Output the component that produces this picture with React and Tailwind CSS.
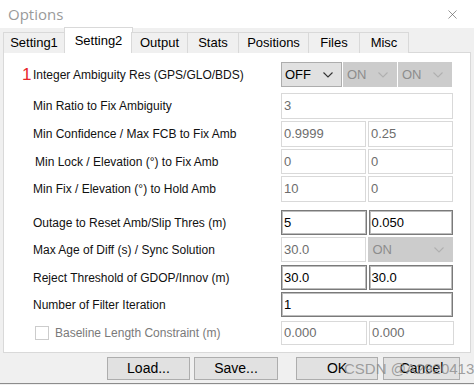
import { X } from 'lucide-react'

const font = { fontFamily: '"Liberation Sans", Arial, sans-serif' }

function Chevron({ color }) {
  return (
    <svg width="10" height="6" viewBox="0 0 10 6" className="shrink-0">
      <path d="M0.5 0.5 L5 5 L9.5 0.5" fill="none" stroke={color} strokeWidth="1.1" />
    </svg>
  )
}

function Select({ value, width, disabled }) {
  return (
    <div
      className={`flex h-full items-center justify-between pl-[3px] pr-[8px] ${width} ${
        disabled
          ? 'bg-[#cccccc] border border-[#cccccc] text-[#8d8d8d]'
          : 'bg-[#e1e1e1] border border-[#adadad] text-black'
      }`}
    >
      <span>{value}</span>
      <Chevron color={disabled ? '#b0b0b0' : '#333'} />
    </div>
  )
}

function Field({ value, active, className = '' }) {
  return (
    <div
      className={`flex h-full items-center px-[2px] bg-white ${
        active
          ? 'border border-[#7a7a7a] shadow-[inset_0_0_0_1px_#bdbdbd] text-black'
          : 'border border-[#d9d9d9] text-[#6d6d6d]'
      } ${className}`}
    >
      {value}
    </div>
  )
}

function Row({ label, children, mt, h = 'h-[25px]', indent = 'pl-[29px]' }) {
  return (
    <div className={`flex items-center ${h} ${mt}`}>
      <div className={`w-[277px] ${indent} text-[12px] text-[#111] whitespace-nowrap`}>{label}</div>
      <div className="flex h-full w-[172px] gap-[2px]">{children}</div>
    </div>
  )
}

const tabs = ['Setting1', 'Setting2', 'Output', 'Stats', 'Positions', 'Files', 'Misc']
const tabW = ['w-[62px]', 'w-[69px]', 'w-[57px]', 'w-[52px]', 'w-[71px]', 'w-[52px]', 'w-[50px]']

export default function App() {
  return (
    <div className="w-[474px] h-[385px] bg-[#f0f0f0] flex flex-col text-[13px] overflow-hidden" style={font}>
      {/* title bar */}
      <div className="h-[28px] bg-white flex items-center justify-between pl-[8px] pr-[14px]">
        <span className="text-[15px] text-[#9a9a9a]" style={{ fontFamily: '"Open Sans", "Liberation Sans", sans-serif' }}>Options</span>
        <X size={15} strokeWidth={1} color="#555" />
      </div>

      {/* tabs */}
      <div className="flex items-end h-[25px] pl-[3px] relative z-10">
        {tabs.map((t, i) =>
          i === 1 ? (
            <div
              key={t}
              className={`${tabW[i]} h-[26px] -mx-[1px] bg-white border border-b-0 border-[#d9d9d9] flex items-start pt-[3px] justify-center text-black`}
            >
              {t}
            </div>
          ) : (
            <div
              key={t}
              className={`${tabW[i]} h-[21px] bg-[#f0f0f0] border border-b-0 border-[#d9d9d9] -ml-[1px] first:ml-0 flex items-center justify-center text-black`}
            >
              {t}
            </div>
          )
        )}
      </div>

      {/* panel */}
      <div className="ml-[3px] w-[468px] h-[301px] -mt-[1px] bg-white border border-[#d9d9d9] flex flex-col">
        <div className="flex items-center h-[25px] mt-[9px]">
          <div className="w-[277px] flex items-center whitespace-nowrap">
            <span className="w-[29px] pl-[18px] text-[17px] leading-none text-[#e8262a]">1</span>
            <span className="text-[12px] text-[#111]">Integer Ambiguity Res (GPS/GLO/BDS)</span>
          </div>
          <div className="flex h-full gap-[1px]">
            <Select value="OFF" width="w-[61px]" />
            <Select value="ON" width="w-[54px]" disabled />
            <Select value="ON" width="w-[54px]" disabled />
          </div>
        </div>

        <Row label="Min Ratio to Fix Ambiguity" mt="mt-[6px]" h="h-[26px]">
          <Field value="3" className="w-full" />
        </Row>
        <Row label="Min Confidence / Max FCB to Fix Amb" mt="mt-[2px]" h="h-[26px]">
          <Field value="0.9999" className="w-[85px]" />
          <Field value="0.25" className="w-[85px]" />
        </Row>
        <Row label="Min Lock / Elevation (°) to Fix Amb" mt="mt-[2px]" indent="pl-[31px]">
          <Field value="0" className="w-[85px]" />
          <Field value="0" className="w-[85px]" />
        </Row>
        <Row label="Min Fix / Elevation (°) to Hold Amb" mt="mt-[2px]" h="h-[26px]">
          <Field value="10" className="w-[85px]" />
          <Field value="0" className="w-[85px]" />
        </Row>

        <Row label="Outage to Reset Amb/Slip Thres (m)" mt="mt-[8px]">
          <Field value="5" active className="w-[86px]" />
          <Field value="0.050" active className="w-[85px]" />
        </Row>
        <Row label="Max Age of Diff (s) / Sync Solution" mt="mt-[2px]">
          <Field value="30.0" className="w-[86px]" />
          <Select value="ON" width="w-[85px]" disabled />
        </Row>
        <Row label="Reject Threshold of GDOP/Innov (m)" mt="mt-[3px]">
          <Field value="30.0" active className="w-[86px]" />
          <Field value="30.0" active className="w-[85px]" />
        </Row>
        <Row label="Number of Filter Iteration" mt="mt-[2px]">
          <Field value="1" active className="w-full" />
        </Row>
        <div className="flex items-center h-[24px] mt-[4px]">
          <div className="w-[277px] pl-[31px] flex items-center gap-[6px] whitespace-nowrap text-[12px] text-[#7a7a7a]">
            <span className="w-[14px] h-[14px] border border-[#cccccc] bg-white" />
            <span>Baseline Length Constraint (m)</span>
          </div>
          <div className="flex h-full gap-[2px]">
            <Field value="0.000" className="w-[86px]" />
            <Field value="0.000" className="w-[85px]" />
          </div>
        </div>
      </div>

      {/* buttons */}
      <div className="relative flex h-[30px] items-center pl-[107px] gap-[4px] text-[14px]">
        <button className="w-[83px] h-[23px] bg-[#e1e1e1] border border-[#adadad] text-black">Load...</button>
        <button className="w-[84px] h-[23px] bg-[#e1e1e1] border border-[#adadad] text-black">Save...</button>
        <button className="ml-[14px] w-[82px] h-[23px] bg-[#e1e1e1] border border-[#adadad] text-black">OK</button>
        <button className="ml-[1px] w-[77px] h-[23px] bg-[#e1e1e1] border border-[#adadad] text-black">Cancel</button>
        <span className="absolute left-[344px] top-[5px] text-[15px] text-[#8a8a8a]/80 whitespace-nowrap pointer-events-none">
          CSDN @A2920413
        </span>
      </div>
      <div className="h-[1px] bg-[#8c8c8c]" />
    </div>
  )
}
